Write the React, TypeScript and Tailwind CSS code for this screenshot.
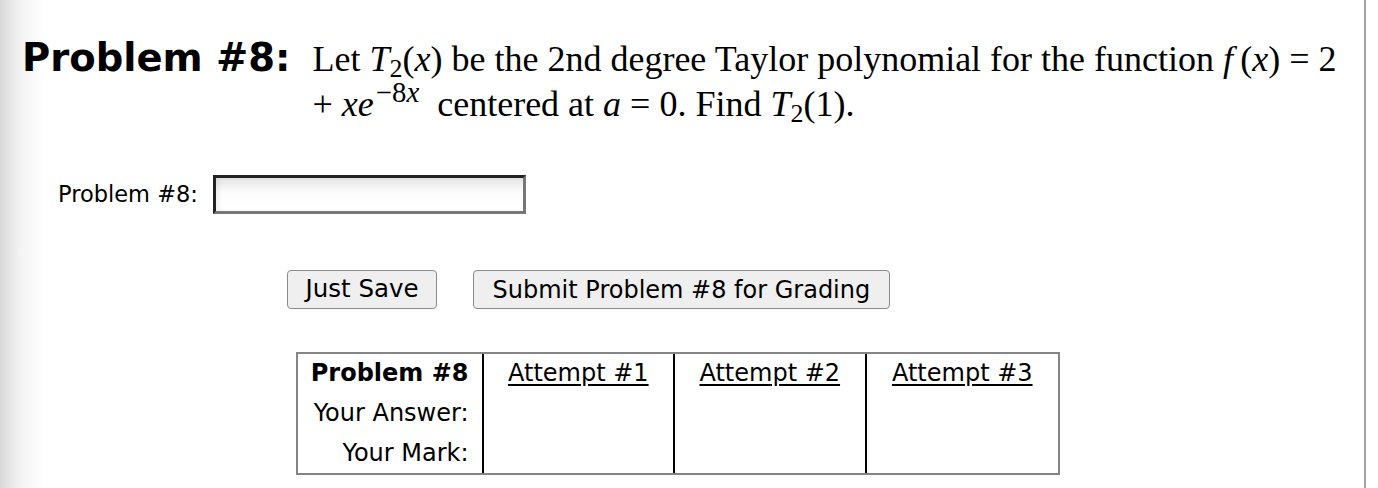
import React from "react";

const serif = "font-['Liberation_Serif','Times_New_Roman',serif]";
const sans = "font-['DejaVu_Sans','Verdana',sans-serif]";

function T2({ arg }: { arg: React.ReactNode }) {
  return (
    <span>
      <i>T</i>
      <span className="text-[0.72em] leading-none relative top-[0.22em]">2</span>
      ({arg})
    </span>
  );
}

export default function App() {
  const attempts = ["Attempt #1", "Attempt #2", "Attempt #3"];

  return (
    <div className={`w-[1378px] h-[488px] overflow-hidden bg-[linear-gradient(to_right,#d9d9d9,#f3f3f3_20px,#ffffff_44px)] ${sans}`}>
      <div className="w-[1366px] h-full border-r-2 border-[#a3a3a3] text-black">
        {/* Question */}
        <div className="flex items-baseline pt-[36px]">
          <h2 className="pl-[22px] text-[38.5px] font-bold leading-[44px] shrink-0">Problem #8:</h2>
          <p className={`${serif} ml-[22px] text-[36px] leading-[45px] w-[1032px]`}>
            Let <T2 arg={<i>x</i>} /> be the 2nd degree Taylor polynomial for the function{" "}
            <i>f</i>&thinsp;(<i>x</i>) = 2 + <i>xe</i>
            <span className="text-[0.8em] leading-none relative -top-[0.5em] ml-[2px]">
              −8<i>x</i>
            </span>{" "}
            &nbsp;centered at <i>a</i> = 0. Find <T2 arg="1" />.
          </p>
        </div>

        {/* Answer input */}
        <div className="flex items-center mt-[48px] pl-[58px] gap-[15px]">
          <label className="text-[22.5px]">Problem #8:</label>
          <div className="w-[313px] h-[39px] border-[3px] border-t-[#222] border-l-[#222] border-b-[#777] border-r-[#777] bg-[linear-gradient(to_bottom,#e4e4e4,#fdfdfd_45%,#ffffff)] shadow-[inset_3px_0_4px_rgba(0,0,0,0.06)]" />
        </div>

        {/* Buttons */}
        <div className="flex items-center mt-[56px] pl-[287px] gap-[36px]">
          <button className="h-[39px] px-[17.5px] text-[24.5px] leading-none bg-[#efefef] border-[1.5px] border-[#8a8a8a] rounded-[4px]">
            Just Save
          </button>
          <button className="h-[39px] px-[18.5px] text-[24px] leading-none bg-[#efefef] border-[1.5px] border-[#8a8a8a] rounded-[4px]">
            Submit Problem #8 for Grading
          </button>
        </div>

        {/* Attempts table */}
        <div className="ml-[296px] mt-[43px] w-[764px] border-2 border-[#858585] flex text-[24px]">
          <div className="w-[186px] border-r-2 border-black flex flex-col items-end pr-[13px]">
            <div className="h-[38px] flex items-center font-bold">Problem #8</div>
            <div className="h-[41px] flex items-center">Your Answer:</div>
            <div className="h-[40px] flex items-center">Your Mark:</div>
          </div>
          {attempts.map((a, i) => (
            <div
              key={a}
              className={`w-[192px] flex flex-col items-center ${i < 2 ? "border-r-2 border-black" : ""}`}
            >
              <div className="h-[38px] flex items-center underline underline-offset-[3px]">{a}</div>
            </div>
          ))}
        </div>
      </div>
    </div>
  );
}
